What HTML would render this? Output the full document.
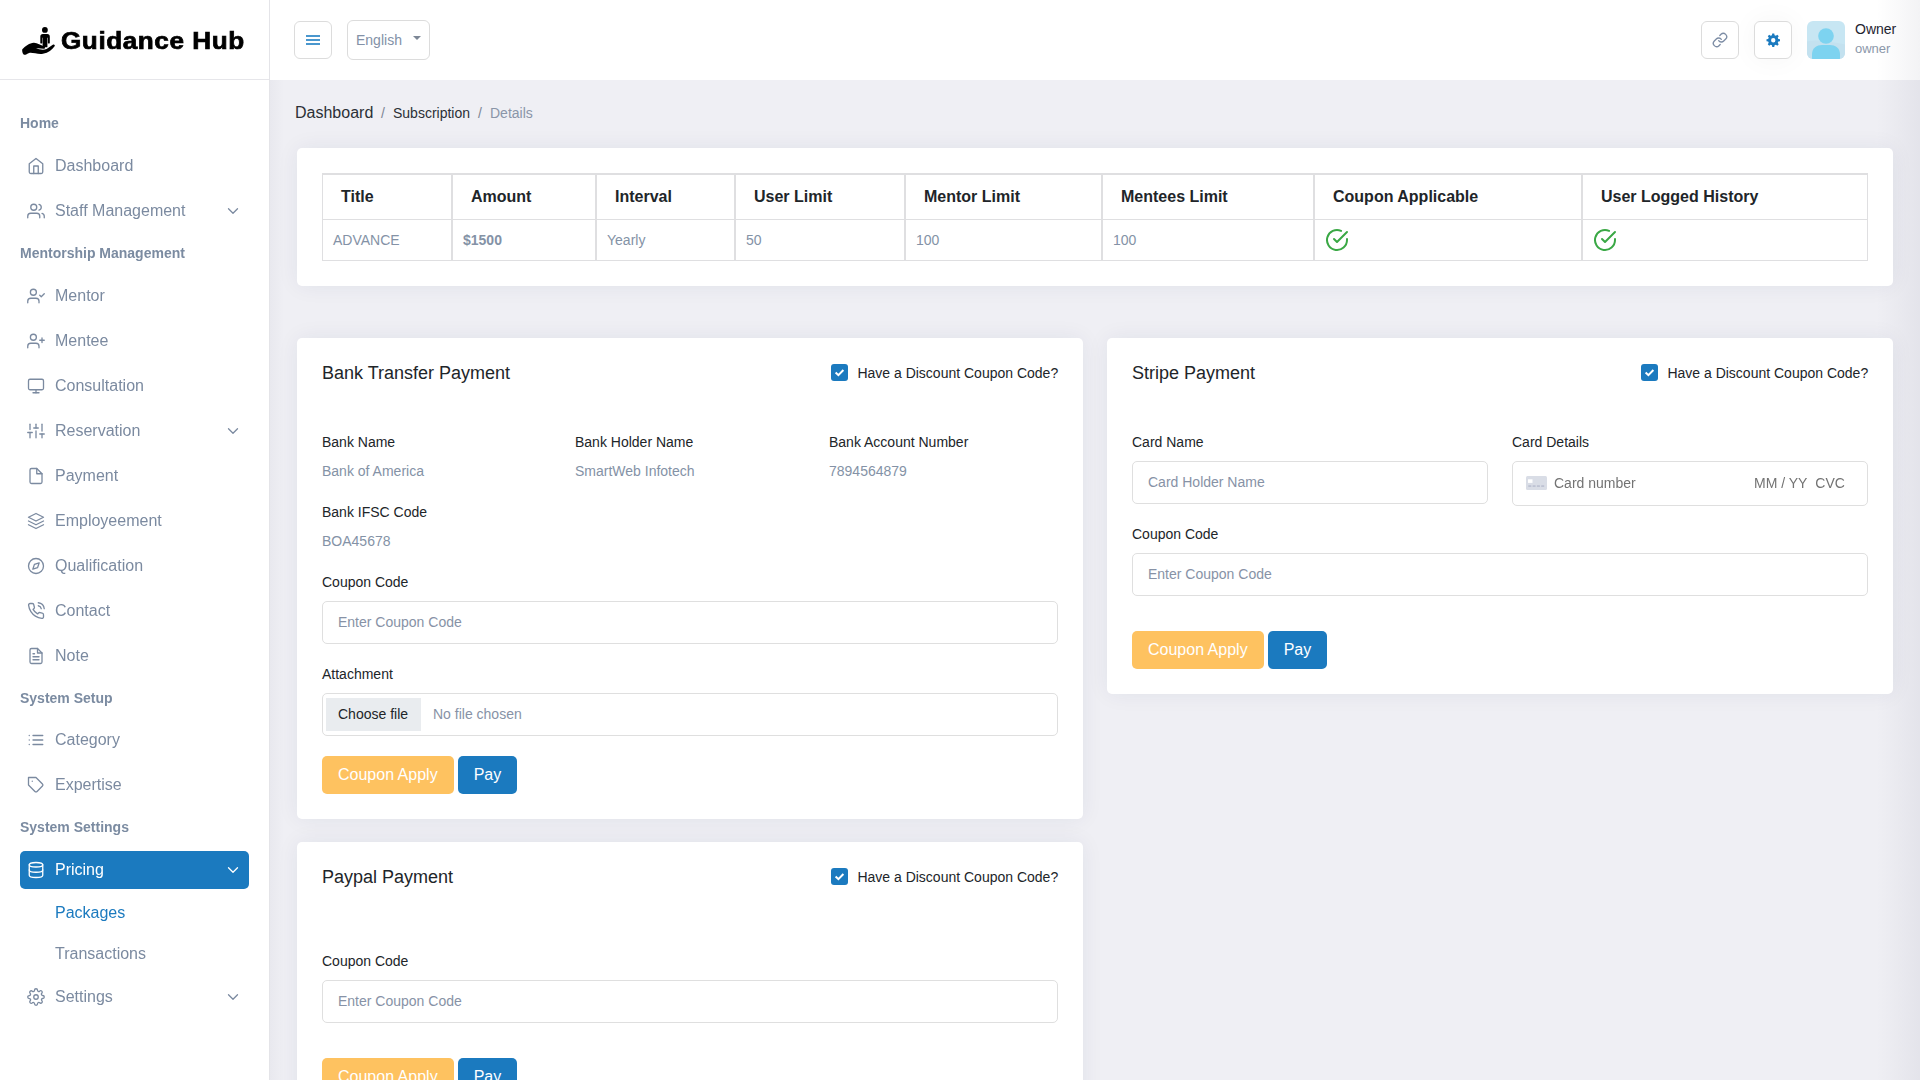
<!DOCTYPE html>
<html><head><meta charset="utf-8"><title>Guidance Hub</title>
<style>
html,body{margin:0;padding:0;}
body{width:1920px;height:1080px;overflow:hidden;position:relative;background:#efeff4;font-family:"Liberation Sans", sans-serif;}
.a{position:absolute;}
.t{position:absolute;white-space:nowrap;}
b{font-weight:700;}
</style></head><body>
<div class="a" style="left:270px;top:0px;width:1650px;height:80px;background:#fff"></div>
<div class="a" style="left:294px;top:21px;width:38px;height:38px;border:1px solid #dcdcdc;border-radius:6px;box-sizing:border-box;background:#fff"></div>
<div class="a" style="left:306px;top:35px;width:14px;height:2px;background:#4a97ce"></div>
<div class="a" style="left:306px;top:39px;width:14px;height:2px;background:#4a97ce"></div>
<div class="a" style="left:306px;top:43px;width:14px;height:2px;background:#4a97ce"></div>
<div class="a" style="left:347px;top:20px;width:83px;height:40px;border:1px solid #dcdcdc;border-radius:6px;box-sizing:border-box;background:#fff"></div>
<div class="t" style="left:356px;top:33px;font-size:14px;line-height:14px;color:#8391a7;">English</div>
<div class="a" style="left:413px;top:36px;width:0;height:0;border-left:4px solid transparent;border-right:4px solid transparent;border-top:4px solid #7d8796"></div>
<div class="a" style="left:1701px;top:21px;width:38px;height:38px;border:1px solid #dcdcdc;border-radius:6px;box-sizing:border-box;background:#fff"></div>
<svg class="a" style="left:1712px;top:32px" width="16" height="16" viewBox="0 0 24 24" fill="none" stroke="#7d8da5" stroke-width="2" stroke-linecap="round" stroke-linejoin="round"><path d="M10 13a5 5 0 0 0 7.54.54l3-3a5 5 0 0 0-7.07-7.07l-1.72 1.71"/><path d="M14 11a5 5 0 0 0-7.54-.54l-3 3a5 5 0 0 0 7.07 7.07l1.71-1.71"/></svg>
<div class="a" style="left:1754px;top:21px;width:38px;height:38px;border:1px solid #dcdcdc;border-radius:6px;box-sizing:border-box;background:#fff;box-shadow:0 0 28px rgba(0,0,0,0.045)"></div>
<svg class="a" style="left:1765.5px;top:33.3px" width="14.5" height="14.5" viewBox="0 0 16 16"><path fill="#1b7abf" fill-rule="evenodd" d="M6.9 0.5h2.2l0.35 1.9a5.6 5.6 0 0 1 1.45 0.6l1.6-1.1 1.55 1.55-1.1 1.6a5.6 5.6 0 0 1 0.6 1.45l1.9 0.35v2.2l-1.9 0.35a5.6 5.6 0 0 1-0.6 1.45l1.1 1.6-1.55 1.55-1.6-1.1a5.6 5.6 0 0 1-1.45 0.6l-0.35 1.9h-2.2l-0.35-1.9a5.6 5.6 0 0 1-1.45-0.6l-1.6 1.1-1.55-1.55 1.1-1.6a5.6 5.6 0 0 1-0.6-1.45l-1.9-0.35v-2.2l1.9-0.35a5.6 5.6 0 0 1 0.6-1.45l-1.1-1.6 1.55-1.55 1.6 1.1a5.6 5.6 0 0 1 1.45-0.6z M8 5.6a2.4 2.4 0 1 0 0 4.8a2.4 2.4 0 1 0 0-4.8z"/></svg>
<div class="a" style="left:1807px;top:21px;width:38px;height:38px;border-radius:6px;overflow:hidden;background:#c7e6f3"><svg style="position:absolute;left:0;top:0" width="38" height="38" viewBox="0 0 38 38"><path d="M0 20.5 Q10 17.5 38 23.5 V38 H0z" fill="#c3e1ef"/><circle cx="19" cy="15" r="7.8" fill="#7dd3f0"/><path d="M5 38 V33 C5 27 10 24 15 24 H23 C28 24 33 27 33 33 V38z" fill="#7dd3f0"/></svg></div>
<div class="t" style="left:1855px;top:22px;font-size:14px;line-height:14px;color:#1e2430;">Owner</div>
<div class="t" style="left:1855px;top:42px;font-size:13px;line-height:13px;color:#8c98aa;">owner</div>
<div class="a" style="left:270px;top:80px;width:14px;height:1000px;background:linear-gradient(to right, rgba(30,30,70,0.03), rgba(30,30,70,0))"></div>
<div class="a" style="left:1876px;top:0px;width:44px;height:1080px;background:linear-gradient(to right, rgba(20,20,60,0) 0%, rgba(20,20,60,0.02) 40%, rgba(20,20,60,0.05) 100%)"></div>
<div class="t" style="left:295px;top:105px;font-size:16px;line-height:16px;color:#2b2f36;">Dashboard</div>
<div class="t" style="left:381px;top:106px;font-size:14px;line-height:14px;color:#7e8694;">/</div>
<div class="t" style="left:393px;top:106px;font-size:14px;line-height:14px;color:#2b2f36;">Subscription</div>
<div class="t" style="left:478px;top:106px;font-size:14px;line-height:14px;color:#7e8694;">/</div>
<div class="t" style="left:490px;top:106px;font-size:14px;line-height:14px;color:#8a95a8;">Details</div>
<div class="a" style="left:297px;top:148px;width:1596px;height:138px;background:#fff;border-radius:5px;box-shadow:0 0 22px rgba(30,40,90,0.065)"></div>
<div class="a" style="left:322px;top:173px;width:1546px;height:2px;background:#dfdfe1"></div>
<div class="a" style="left:322px;top:219px;width:1546px;height:1px;background:#dfdfe1"></div>
<div class="a" style="left:322px;top:260px;width:1546px;height:1px;background:#dfdfe1"></div>
<div class="a" style="left:322px;top:173px;width:1px;height:88px;background:#dfdfe1"></div>
<div class="a" style="left:1867px;top:173px;width:1px;height:88px;background:#dfdfe1"></div>
<div class="a" style="left:451px;top:173px;width:2px;height:88px;background:#dfdfe1"></div>
<div class="a" style="left:595px;top:173px;width:2px;height:88px;background:#dfdfe1"></div>
<div class="a" style="left:734px;top:173px;width:2px;height:88px;background:#dfdfe1"></div>
<div class="a" style="left:904px;top:173px;width:2px;height:88px;background:#dfdfe1"></div>
<div class="a" style="left:1101px;top:173px;width:2px;height:88px;background:#dfdfe1"></div>
<div class="a" style="left:1313px;top:173px;width:2px;height:88px;background:#dfdfe1"></div>
<div class="a" style="left:1581px;top:173px;width:2px;height:88px;background:#dfdfe1"></div>
<div class="t" style="left:341px;top:189px;font-size:16px;line-height:16px;color:#212529;font-weight:700;">Title</div>
<div class="t" style="left:471px;top:189px;font-size:16px;line-height:16px;color:#212529;font-weight:700;">Amount</div>
<div class="t" style="left:615px;top:189px;font-size:16px;line-height:16px;color:#212529;font-weight:700;">Interval</div>
<div class="t" style="left:754px;top:189px;font-size:16px;line-height:16px;color:#212529;font-weight:700;">User Limit</div>
<div class="t" style="left:924px;top:189px;font-size:16px;line-height:16px;color:#212529;font-weight:700;">Mentor Limit</div>
<div class="t" style="left:1121px;top:189px;font-size:16px;line-height:16px;color:#212529;font-weight:700;">Mentees Limit</div>
<div class="t" style="left:1333px;top:189px;font-size:16px;line-height:16px;color:#212529;font-weight:700;">Coupon Applicable</div>
<div class="t" style="left:1601px;top:189px;font-size:16px;line-height:16px;color:#212529;font-weight:700;">User Logged History</div>
<div class="t" style="left:333px;top:233px;font-size:14px;line-height:14px;color:#8492a6;">ADVANCE</div>
<div class="t" style="left:463px;top:233px;font-size:14px;line-height:14px;color:#8492a6;"><b>$1500</b></div>
<div class="t" style="left:607px;top:233px;font-size:14px;line-height:14px;color:#8492a6;">Yearly</div>
<div class="t" style="left:746px;top:233px;font-size:14px;line-height:14px;color:#8492a6;">50</div>
<div class="t" style="left:916px;top:233px;font-size:14px;line-height:14px;color:#8492a6;">100</div>
<div class="t" style="left:1113px;top:233px;font-size:14px;line-height:14px;color:#8492a6;">100</div>
<svg class="a" style="left:1325px;top:228px" width="24" height="24" viewBox="0 0 24 24" fill="none" stroke="#3aa845" stroke-width="2" stroke-linecap="round" stroke-linejoin="round"><path d="M22 11.08V12a10 10 0 1 1-5.93-9.14"/><polyline points="22 4 12 14.01 9 11.01"/></svg>
<svg class="a" style="left:1593px;top:228px" width="24" height="24" viewBox="0 0 24 24" fill="none" stroke="#3aa845" stroke-width="2" stroke-linecap="round" stroke-linejoin="round"><path d="M22 11.08V12a10 10 0 1 1-5.93-9.14"/><polyline points="22 4 12 14.01 9 11.01"/></svg>
<div class="a" style="left:297px;top:338px;width:786px;height:481px;background:#fff;border-radius:5px;box-shadow:0 0 22px rgba(30,40,90,0.065)"></div>
<div class="t" style="left:322px;top:364px;font-size:18px;line-height:18px;color:#212529;">Bank Transfer Payment</div>
<svg class="a" style="left:831px;top:364px" width="17" height="17" viewBox="0 0 17 17"><rect width="17" height="17" rx="3" fill="#1b7abf"/><polyline points="4.6 8.5 7.4 11.2 12.4 6.0" fill="none" stroke="#fff" stroke-width="2"/></svg>
<div class="t" style="left:857.4px;top:366px;font-size:14px;line-height:14px;color:#212529;">Have a Discount Coupon Code?</div>
<div class="t" style="left:322px;top:435px;font-size:14px;line-height:14px;color:#212529;">Bank Name</div>
<div class="t" style="left:322px;top:464px;font-size:14px;line-height:14px;color:#8492a6;">Bank of America</div>
<div class="t" style="left:575px;top:435px;font-size:14px;line-height:14px;color:#212529;">Bank Holder Name</div>
<div class="t" style="left:575px;top:464px;font-size:14px;line-height:14px;color:#8492a6;">SmartWeb Infotech</div>
<div class="t" style="left:829px;top:435px;font-size:14px;line-height:14px;color:#212529;">Bank Account Number</div>
<div class="t" style="left:829px;top:464px;font-size:14px;line-height:14px;color:#8492a6;">7894564879</div>
<div class="t" style="left:322px;top:505px;font-size:14px;line-height:14px;color:#212529;">Bank IFSC Code</div>
<div class="t" style="left:322px;top:534px;font-size:14px;line-height:14px;color:#8492a6;">BOA45678</div>
<div class="t" style="left:322px;top:575px;font-size:14px;line-height:14px;color:#212529;">Coupon Code</div>
<div class="a" style="left:322px;top:601px;width:736px;height:43px;border:1px solid #dfdfdf;border-radius:5px;box-sizing:border-box;background:#fff"></div>
<div class="t" style="left:338px;top:615px;font-size:14px;line-height:14px;color:#8792a6;">Enter Coupon Code</div>
<div class="t" style="left:322px;top:667px;font-size:14px;line-height:14px;color:#212529;">Attachment</div>
<div class="a" style="left:322px;top:693px;width:736px;height:43px;border:1px solid #dfdfdf;border-radius:5px;box-sizing:border-box;background:#fff"></div>
<div class="a" style="left:326px;top:698px;width:95px;height:33px;background:#e9ecef"></div>
<div class="t" style="left:338px;top:707px;font-size:14px;line-height:14px;color:#212529;">Choose file</div>
<div class="t" style="left:433px;top:707px;font-size:14px;line-height:14px;color:#8792a6;">No file chosen</div>
<div class="a" style="left:322px;top:756px;width:132px;height:38px;background:#fec260;border-radius:5px"></div>
<div class="t" style="left:338px;top:767px;font-size:16px;line-height:16px;color:#fff;">Coupon Apply</div>
<div class="a" style="left:458px;top:756px;width:59px;height:38px;background:#1b7abf;border-radius:5px"></div>
<div class="t" style="left:473.7px;top:767px;font-size:16px;line-height:16px;color:#fff;">Pay</div>
<div class="a" style="left:1107px;top:338px;width:786px;height:356px;background:#fff;border-radius:5px;box-shadow:0 0 22px rgba(30,40,90,0.065)"></div>
<div class="t" style="left:1132px;top:364px;font-size:18px;line-height:18px;color:#212529;">Stripe Payment</div>
<svg class="a" style="left:1641px;top:364px" width="17" height="17" viewBox="0 0 17 17"><rect width="17" height="17" rx="3" fill="#1b7abf"/><polyline points="4.6 8.5 7.4 11.2 12.4 6.0" fill="none" stroke="#fff" stroke-width="2"/></svg>
<div class="t" style="left:1667.4px;top:366px;font-size:14px;line-height:14px;color:#212529;">Have a Discount Coupon Code?</div>
<div class="t" style="left:1132px;top:435px;font-size:14px;line-height:14px;color:#212529;">Card Name</div>
<div class="a" style="left:1132px;top:461px;width:356px;height:43px;border:1px solid #dfdfdf;border-radius:5px;box-sizing:border-box;background:#fff"></div>
<div class="t" style="left:1148px;top:475px;font-size:14px;line-height:14px;color:#8792a6;">Card Holder Name</div>
<div class="t" style="left:1512px;top:435px;font-size:14px;line-height:14px;color:#212529;">Card Details</div>
<div class="a" style="left:1512px;top:461px;width:356px;height:45px;border:1px solid #dfdfdf;border-radius:5px;box-sizing:border-box;background:#fff"></div>
<svg class="a" style="left:1526px;top:476px" width="21" height="14" viewBox="0 0 21 14"><rect width="21" height="14" rx="1.5" fill="#d9dde6"/><rect x="2" y="3.3" width="4.5" height="3.6" fill="#fff"/><rect x="2.3" y="9.6" width="3" height="0.9" fill="#a3a9bf"/><rect x="6.6" y="9.6" width="3" height="0.9" fill="#a3a9bf"/><rect x="10.9" y="9.6" width="3" height="0.9" fill="#a3a9bf"/><rect x="15.2" y="9.6" width="3" height="0.9" fill="#a3a9bf"/></svg>
<div class="t" style="left:1132px;top:527px;font-size:14px;line-height:14px;color:#212529;">Coupon Code</div>
<div class="a" style="left:1132px;top:553px;width:736px;height:43px;border:1px solid #dfdfdf;border-radius:5px;box-sizing:border-box;background:#fff"></div>
<div class="t" style="left:1148px;top:567px;font-size:14px;line-height:14px;color:#8792a6;">Enter Coupon Code</div>
<div class="a" style="left:1132px;top:631px;width:132px;height:38px;background:#fec260;border-radius:5px"></div>
<div class="t" style="left:1148px;top:642px;font-size:16px;line-height:16px;color:#fff;">Coupon Apply</div>
<div class="a" style="left:1268px;top:631px;width:59px;height:38px;background:#1b7abf;border-radius:5px"></div>
<div class="t" style="left:1283.7px;top:642px;font-size:16px;line-height:16px;color:#fff;">Pay</div>
<div class="a" style="left:297px;top:842px;width:786px;height:400px;background:#fff;border-radius:5px;box-shadow:0 0 22px rgba(30,40,90,0.065)"></div>
<div class="t" style="left:322px;top:868px;font-size:18px;line-height:18px;color:#212529;">Paypal Payment</div>
<svg class="a" style="left:831px;top:868px" width="17" height="17" viewBox="0 0 17 17"><rect width="17" height="17" rx="3" fill="#1b7abf"/><polyline points="4.6 8.5 7.4 11.2 12.4 6.0" fill="none" stroke="#fff" stroke-width="2"/></svg>
<div class="t" style="left:857.4px;top:870px;font-size:14px;line-height:14px;color:#212529;">Have a Discount Coupon Code?</div>
<div class="t" style="left:322px;top:954px;font-size:14px;line-height:14px;color:#212529;">Coupon Code</div>
<div class="a" style="left:322px;top:980px;width:736px;height:43px;border:1px solid #dfdfdf;border-radius:5px;box-sizing:border-box;background:#fff"></div>
<div class="t" style="left:338px;top:994px;font-size:14px;line-height:14px;color:#8792a6;">Enter Coupon Code</div>
<div class="a" style="left:322px;top:1058px;width:132px;height:38px;background:#fec260;border-radius:5px"></div>
<div class="t" style="left:338px;top:1069px;font-size:16px;line-height:16px;color:#fff;">Coupon Apply</div>
<div class="a" style="left:458px;top:1058px;width:59px;height:38px;background:#1b7abf;border-radius:5px"></div>
<div class="t" style="left:473.7px;top:1069px;font-size:16px;line-height:16px;color:#fff;">Pay</div>
<div class="a" style="left:0;top:0;width:270px;height:1080px;will-change:transform">
<div class="a" style="left:0px;top:0px;width:269px;height:1080px;background:#fff"></div>
<div class="a" style="left:269px;top:0px;width:1px;height:1080px;background:#e4e4e8"></div>
<div class="a" style="left:0px;top:79px;width:269px;height:1px;background:#e6e6ea"></div>
<svg class="a" style="left:18px;top:22px" width="42" height="38" viewBox="0 0 42 38">
<circle cx="26.9" cy="7.9" r="2.9" fill="#000"/>
<path d="M22.3 21 V14.6 Q22.3 12 24.9 12 H29.2 Q31.8 12 31.8 14.6 V21 Q31.8 21.4 31.3 21.4 H30.4 Q29.9 21.4 29.9 21 V15.8 H29.4 V25.3 H24.6 V15.8 H24.2 V21 Q24.2 21.4 23.7 21.4 H22.8 Q22.3 21.4 22.3 21z" fill="#000"/>
<path d="M4.3 27.2 C7 24.5 12 20.6 16 20.8 C19.5 21 22.5 23 26.2 24.6 C27.6 25.3 27.4 26.9 25.8 26.8 C23 26.5 20.2 25.8 18 26.3 C21 27.4 25 28.2 28.6 27.1 L34.8 22.7 C35.9 21.8 37.4 23.1 36.6 24.2 C34 27.7 30.5 30.6 25 31.8 C20 32.7 14.5 30.2 11.2 30.9 C9.2 31.4 7.6 33.1 6.1 32.8 C5 32.4 3.8 29.2 4.3 27.2z" fill="#000"/>
</svg>
<div class="t" style="left:61px;top:27px;font-size:23px;line-height:28px;color:#000;font-weight:700;letter-spacing:0.5px;transform:scaleX(1.135);transform-origin:0 0;-webkit-text-stroke:0.7px #000">Guidance Hub</div>
<div class="t" style="left:20px;top:116px;font-size:14px;line-height:14px;color:#7b8ba1;font-weight:700;">Home</div>
<svg class="a" style="left:27px;top:157px" width="18" height="18" viewBox="0 0 24 24" fill="none" stroke="#7b8aa0" stroke-width="1.75" stroke-linecap="round" stroke-linejoin="round"><path d="M3 9l9-7 9 7v11a2 2 0 0 1-2 2H5a2 2 0 0 1-2-2z"/><polyline points="9 22 9 12 15 12 15 22"/></svg>
<div class="t" style="left:55px;top:158px;font-size:16px;line-height:16px;color:#7b8aa0;">Dashboard</div>
<svg class="a" style="left:27px;top:202px" width="18" height="18" viewBox="0 0 24 24" fill="none" stroke="#7b8aa0" stroke-width="1.75" stroke-linecap="round" stroke-linejoin="round"><path d="M17 21v-2a4 4 0 0 0-4-4H5a4 4 0 0 0-4 4v2"/><circle cx="9" cy="7" r="4"/><path d="M23 21v-2a4 4 0 0 0-3-3.87"/><path d="M16 3.13a4 4 0 0 1 0 7.75"/></svg>
<div class="t" style="left:55px;top:203px;font-size:16px;line-height:16px;color:#7b8aa0;">Staff Management</div>
<svg class="a" style="left:224px;top:202px" width="18" height="18" viewBox="0 0 24 24" fill="none" stroke="#7b8aa0" stroke-width="1.75" stroke-linecap="round" stroke-linejoin="round"><polyline points="6 9 12 15 18 9"/></svg>
<div class="t" style="left:20px;top:246px;font-size:14px;line-height:14px;color:#7b8ba1;font-weight:700;">Mentorship Management</div>
<svg class="a" style="left:27px;top:287px" width="18" height="18" viewBox="0 0 24 24" fill="none" stroke="#7b8aa0" stroke-width="1.75" stroke-linecap="round" stroke-linejoin="round"><path d="M16 21v-2a4 4 0 0 0-4-4H5a4 4 0 0 0-4 4v2"/><circle cx="8.5" cy="7" r="4"/><polyline points="17 11 19 13 23 9"/></svg>
<div class="t" style="left:55px;top:288px;font-size:16px;line-height:16px;color:#7b8aa0;">Mentor</div>
<svg class="a" style="left:27px;top:332px" width="18" height="18" viewBox="0 0 24 24" fill="none" stroke="#7b8aa0" stroke-width="1.75" stroke-linecap="round" stroke-linejoin="round"><path d="M16 21v-2a4 4 0 0 0-4-4H5a4 4 0 0 0-4 4v2"/><circle cx="8.5" cy="7" r="4"/><line x1="20" y1="8" x2="20" y2="14"/><line x1="23" y1="11" x2="17" y2="11"/></svg>
<div class="t" style="left:55px;top:333px;font-size:16px;line-height:16px;color:#7b8aa0;">Mentee</div>
<svg class="a" style="left:27px;top:377px" width="18" height="18" viewBox="0 0 24 24" fill="none" stroke="#7b8aa0" stroke-width="1.75" stroke-linecap="round" stroke-linejoin="round"><rect x="2" y="3" width="20" height="14" rx="2" ry="2"/><line x1="8" y1="21" x2="16" y2="21"/><line x1="12" y1="17" x2="12" y2="21"/></svg>
<div class="t" style="left:55px;top:378px;font-size:16px;line-height:16px;color:#7b8aa0;">Consultation</div>
<svg class="a" style="left:27px;top:422px" width="18" height="18" viewBox="0 0 24 24" fill="none" stroke="#7b8aa0" stroke-width="1.75" stroke-linecap="round" stroke-linejoin="round"><line x1="4" y1="21" x2="4" y2="14"/><line x1="4" y1="10" x2="4" y2="3"/><line x1="12" y1="21" x2="12" y2="12"/><line x1="12" y1="8" x2="12" y2="3"/><line x1="20" y1="21" x2="20" y2="16"/><line x1="20" y1="12" x2="20" y2="3"/><line x1="1" y1="14" x2="7" y2="14"/><line x1="9" y1="8" x2="15" y2="8"/><line x1="17" y1="16" x2="23" y2="16"/></svg>
<div class="t" style="left:55px;top:423px;font-size:16px;line-height:16px;color:#7b8aa0;">Reservation</div>
<svg class="a" style="left:224px;top:422px" width="18" height="18" viewBox="0 0 24 24" fill="none" stroke="#7b8aa0" stroke-width="1.75" stroke-linecap="round" stroke-linejoin="round"><polyline points="6 9 12 15 18 9"/></svg>
<svg class="a" style="left:27px;top:467px" width="18" height="18" viewBox="0 0 24 24" fill="none" stroke="#7b8aa0" stroke-width="1.75" stroke-linecap="round" stroke-linejoin="round"><path d="M13 2H6a2 2 0 0 0-2 2v16a2 2 0 0 0 2 2h12a2 2 0 0 0 2-2V9z"/><polyline points="13 2 13 9 20 9"/></svg>
<div class="t" style="left:55px;top:468px;font-size:16px;line-height:16px;color:#7b8aa0;">Payment</div>
<svg class="a" style="left:27px;top:512px" width="18" height="18" viewBox="0 0 24 24" fill="none" stroke="#7b8aa0" stroke-width="1.75" stroke-linecap="round" stroke-linejoin="round"><polygon points="12 2 2 7 12 12 22 7 12 2"/><polyline points="2 17 12 22 22 17"/><polyline points="2 12 12 17 22 12"/></svg>
<div class="t" style="left:55px;top:513px;font-size:16px;line-height:16px;color:#7b8aa0;">Employeement</div>
<svg class="a" style="left:27px;top:557px" width="18" height="18" viewBox="0 0 24 24" fill="none" stroke="#7b8aa0" stroke-width="1.75" stroke-linecap="round" stroke-linejoin="round"><circle cx="12" cy="12" r="10"/><polygon points="16.24 7.76 14.12 14.12 7.76 16.24 9.88 9.88 16.24 7.76"/></svg>
<div class="t" style="left:55px;top:558px;font-size:16px;line-height:16px;color:#7b8aa0;">Qualification</div>
<svg class="a" style="left:27px;top:602px" width="18" height="18" viewBox="0 0 24 24" fill="none" stroke="#7b8aa0" stroke-width="1.75" stroke-linecap="round" stroke-linejoin="round"><path d="M15.05 5A5 5 0 0 1 19 8.95M15.05 1A9 9 0 0 1 23 8.94m-1 7.98v3a2 2 0 0 1-2.18 2 19.790 19.790 0 0 1-8.63-3.07 19.5 19.5 0 0 1-6-6 19.79 19.79 0 0 1-3.070-8.67A2 2 0 0 1 4.11 2h3a2 2 0 0 1 2 1.72 12.84 12.84 0 0 0 .7 2.81 2 2 0 0 1-.45 2.11L8.09 9.91a16 16 0 0 0 6 6l1.27-1.27a2 2 0 0 1 2.11-.45 12.84 12.84 0 0 0 2.81.7A2 2 0 0 1 22 16.92z"/></svg>
<div class="t" style="left:55px;top:603px;font-size:16px;line-height:16px;color:#7b8aa0;">Contact</div>
<svg class="a" style="left:27px;top:647px" width="18" height="18" viewBox="0 0 24 24" fill="none" stroke="#7b8aa0" stroke-width="1.75" stroke-linecap="round" stroke-linejoin="round"><path d="M14 2H6a2 2 0 0 0-2 2v16a2 2 0 0 0 2 2h12a2 2 0 0 0 2-2V8z"/><polyline points="14 2 14 8 20 8"/><line x1="16" y1="13" x2="8" y2="13"/><line x1="16" y1="17" x2="8" y2="17"/><polyline points="10 9 9 9 8 9"/></svg>
<div class="t" style="left:55px;top:648px;font-size:16px;line-height:16px;color:#7b8aa0;">Note</div>
<div class="t" style="left:20px;top:691px;font-size:14px;line-height:14px;color:#7b8ba1;font-weight:700;">System Setup</div>
<svg class="a" style="left:27px;top:731px" width="18" height="18" viewBox="0 0 24 24" fill="none" stroke="#7b8aa0" stroke-width="1.75" stroke-linecap="round" stroke-linejoin="round"><line x1="8" y1="6" x2="21" y2="6"/><line x1="8" y1="12" x2="21" y2="12"/><line x1="8" y1="18" x2="21" y2="18"/><line x1="3" y1="6" x2="3.01" y2="6"/><line x1="3" y1="12" x2="3.01" y2="12"/><line x1="3" y1="18" x2="3.01" y2="18"/></svg>
<div class="t" style="left:55px;top:732px;font-size:16px;line-height:16px;color:#7b8aa0;">Category</div>
<svg class="a" style="left:27px;top:776px" width="18" height="18" viewBox="0 0 24 24" fill="none" stroke="#7b8aa0" stroke-width="1.75" stroke-linecap="round" stroke-linejoin="round"><path d="M20.59 13.41l-7.17 7.17a2 2 0 0 1-2.83 0L2 12V2h10l8.59 8.59a2 2 0 0 1 0 2.82z"/><line x1="7" y1="7" x2="7.01" y2="7"/></svg>
<div class="t" style="left:55px;top:777px;font-size:16px;line-height:16px;color:#7b8aa0;">Expertise</div>
<div class="t" style="left:20px;top:820px;font-size:14px;line-height:14px;color:#7b8ba1;font-weight:700;">System Settings</div>
<div class="a" style="left:20px;top:851px;width:229px;height:38px;background:#1b7abf;border-radius:5px"></div>
<svg class="a" style="left:27px;top:861px" width="18" height="18" viewBox="0 0 24 24" fill="none" stroke="#fff" stroke-width="1.75" stroke-linecap="round" stroke-linejoin="round"><ellipse cx="12" cy="5" rx="9" ry="3"/><path d="M21 12c0 1.66-4 3-9 3s-9-1.34-9-3"/><path d="M3 5v14c0 1.66 4 3 9 3s9-1.34 9-3V5"/></svg>
<div class="t" style="left:55px;top:862px;font-size:16px;line-height:16px;color:#fff;">Pricing</div>
<svg class="a" style="left:224px;top:861px" width="18" height="18" viewBox="0 0 24 24" fill="none" stroke="#fff" stroke-width="1.75" stroke-linecap="round" stroke-linejoin="round"><polyline points="6 9 12 15 18 9"/></svg>
<div class="t" style="left:55px;top:905px;font-size:16px;line-height:16px;color:#1b7abf;">Packages</div>
<div class="t" style="left:55px;top:946px;font-size:16px;line-height:16px;color:#7b8aa0;">Transactions</div>
<svg class="a" style="left:27px;top:988px" width="18" height="18" viewBox="0 0 24 24" fill="none" stroke="#7b8aa0" stroke-width="1.75" stroke-linecap="round" stroke-linejoin="round"><circle cx="12" cy="12" r="3"/><path d="M19.4 15a1.65 1.65 0 0 0 .33 1.82l.06.06a2 2 0 0 1 0 2.83 2 2 0 0 1-2.83 0l-.06-.06a1.65 1.65 0 0 0-1.82-.33 1.65 1.65 0 0 0-1 1.51V21a2 2 0 0 1-2 2 2 2 0 0 1-2-2v-.09A1.65 1.65 0 0 0 9 19.4a1.65 1.65 0 0 0-1.820.33l-.06.06a2 2 0 0 1-2.83 0 2 2 0 0 1 0-2.83l.06-.06a1.65 1.65 0 0 0 .33-1.82 1.65 1.65 0 0 0-1.51-1H3a2 2 0 0 1-2-2 2 2 0 0 1 2-2h.09A1.65 1.65 0 0 0 4.6 9a1.65 1.65 0 0 0-.33-1.82l-.06-.06a2 2 0 0 1 0-2.83 2 2 0 0 1 2.83 0l.06.06a1.65 1.65 0 0 0 1.82.33H9a1.65 1.65 0 0 0 1-1.51V3a2 2 0 0 1 2-2 2 2 0 0 1 2 2v.09a1.65 1.65 0 0 0 1 1.51 1.65 1.65 0 0 0 1.82-.33l.06-.06a2 2 0 0 1 2.83 0 2 2 0 0 1 0 2.83l-.06.06a1.65 1.65 0 0 0-.33 1.82V9a1.65 1.65 0 0 0 1.51 1H21a2 2 0 0 1 2 2 2 2 0 0 1-2 2h-.09a1.65 1.65 0 0 0-1.51 1z"/></svg>
<div class="t" style="left:55px;top:989px;font-size:16px;line-height:16px;color:#7b8aa0;">Settings</div>
<svg class="a" style="left:224px;top:988px" width="18" height="18" viewBox="0 0 24 24" fill="none" stroke="#7b8aa0" stroke-width="1.75" stroke-linecap="round" stroke-linejoin="round"><polyline points="6 9 12 15 18 9"/></svg>
</div>
<div class="a" style="left:1513px;top:462px;width:354px;height:43px;will-change:transform"><div class="t" style="left:41px;top:14px;font-size:14px;line-height:14px;color:#737373;">Card number</div>
<div class="t" style="left:241px;top:14px;font-size:14px;line-height:14px;color:#737373;">MM / YY</div>
<div class="t" style="left:302.3px;top:14px;font-size:14px;line-height:14px;color:#737373;">CVC</div>
</div>

</body></html>
